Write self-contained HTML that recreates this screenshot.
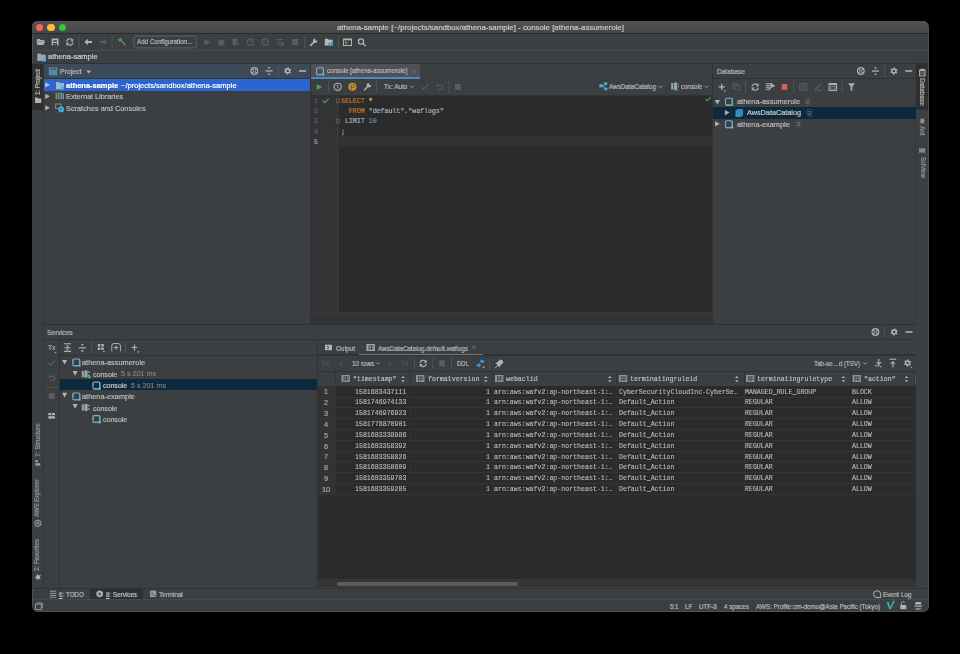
<!DOCTYPE html>
<html><head><meta charset="utf-8">
<style>
*{margin:0;padding:0;box-sizing:border-box}
html,body{width:960px;height:654px;background:#000;overflow:hidden;font-family:"Liberation Sans",sans-serif;color:#bbbbbb;position:relative}
.a{position:absolute}
.t{position:absolute;white-space:pre;line-height:1;will-change:transform;-webkit-text-stroke-width:0.2px}
.m{font-family:"Liberation Mono",monospace}
</style></head><body>
<div class="a" style="left:31.5px;top:20.5px;width:897px;height:591.3px;background:#3c3f41;border-radius:5.5px;border:1px solid #4d4f51"></div>
<div class="a" style="left:32px;top:21px;width:896px;height:12px;background:linear-gradient(#525252,#464646);border-radius:5px 5px 0 0"></div>
<div class="a" style="left:32px;top:33px;width:896px;height:1px;background:#2a2a2a;"></div>
<div class="a" style="left:35.9px;top:24.0px;width:7.4px;height:7.4px;border-radius:50%;background:#fe5f57"></div>
<div class="a" style="left:47.3px;top:24.0px;width:7.4px;height:7.4px;border-radius:50%;background:#febc2e"></div>
<div class="a" style="left:58.8px;top:24.0px;width:7.4px;height:7.4px;border-radius:50%;background:#28c840"></div>
<div class="t" style="left:337.2px;top:24.0px;font-size:7.86px;color:#cacaca;">athena-sample [~/projects/sandbox/athena-sample] - console [athena-assumerole]</div>
<div class="a" style="left:32px;top:50px;width:896px;height:1px;background:#4b4d4f;"></div>
<div class="t" style="left:47.6px;top:52.6px;font-size:7.5px;color:#cfcfcf;">athena-sample</div>
<div class="a" style="left:32px;top:63px;width:896px;height:1px;background:#323232;"></div>
<div class="a" style="left:32px;top:63px;width:11px;height:525px;background:#3c3f41;"></div>
<div class="a" style="left:43px;top:63px;width:1px;height:525px;background:#333537;"></div>
<div class="a" style="left:32px;top:64px;width:11px;height:46px;background:#2d2f31;"></div>
<div class="a" style="left:916px;top:63px;width:12px;height:525px;background:#3c3f41;"></div>
<div class="a" style="left:915px;top:63px;width:1px;height:261px;background:#333537;"></div>
<div class="a" style="left:916px;top:63px;width:12px;height:47px;background:#2d2f31;"></div>
<div class="a" style="left:44px;top:64px;width:266px;height:14px;background:#3d4a58;"></div>
<div class="a" style="left:44px;top:78px;width:266px;height:1px;background:#323436;"></div>
<div class="t" style="left:59.7px;top:67.5px;font-size:7.0px;color:#bbbbbb;">Project</div>
<div class="a" style="left:44px;top:79px;width:266px;height:12px;background:#2e64d0;"></div>
<div class="t" style="left:66px;top:81.9px;font-size:7.46px;color:#ffffff;font-weight:bold">athena-sample</div>
<div class="t" style="left:120.5px;top:81.9px;font-size:7.56px;color:#ffffff;">~/projects/sandbox/athena-sample</div>
<div class="t" style="left:66px;top:93.3px;font-size:7.35px;color:#bbbbbb;">External Libraries</div>
<div class="t" style="left:66px;top:104.8px;font-size:7.35px;color:#bbbbbb;">Scratches and Consoles</div>
<div class="a" style="left:310px;top:63px;width:1px;height:261px;background:#323232;"></div>
<div class="a" style="left:311px;top:64px;width:402px;height:15px;background:#3c3f41;"></div>
<div class="a" style="left:311px;top:64px;width:109px;height:15px;background:#4e5254;"></div>
<div class="a" style="left:311px;top:77px;width:109px;height:2px;background:#4a88c7;"></div>
<div class="t" style="left:326.75px;top:67.06px;font-size:7.000px;color:#bbbbbb;transform:scaleX(0.8929);transform-origin:0 0;">console [athena-assumerole]</div>
<div class="a" style="left:311px;top:79px;width:402px;height:16px;background:#3c3f41;"></div>
<div class="a" style="left:311px;top:95px;width:402px;height:1px;background:#323232;"></div>
<div class="a" style="left:311px;top:96px;width:28px;height:216px;background:#313335;"></div>
<div class="a" style="left:339px;top:96px;width:374px;height:216px;background:#2b2b2b;"></div>
<div class="a" style="left:338.4px;top:136.1px;width:374.6px;height:9.9px;background:#323232;"></div>
<div class="a" style="left:311px;top:312px;width:402px;height:12px;background:#313335;"></div>
<div class="a" style="left:311px;top:311.6px;width:402px;height:0.8px;background:#37393b;"></div>
<div class="t" style="left:384px;top:83.95px;font-size:7.168px;color:#bbbbbb;transform:scaleX(0.8929);transform-origin:0 0;">Tx: Auto</div>
<div class="t" style="left:609px;top:84.05px;font-size:7.090px;color:#bbbbbb;transform:scaleX(0.8929);transform-origin:0 0;">AwsDataCatalog</div>
<div class="t" style="left:680.7px;top:84.06px;font-size:6.922px;color:#bbbbbb;transform:scaleX(0.8929);transform-origin:0 0;">console</div>
<div class="t m" style="left:340.8px;top:97.84px;font-size:7.392px;color:#a9b7c6;transform:scaleX(0.8929);transform-origin:0 0;"><span style="color:#cc7832;-webkit-text-stroke:0.2px #cc7832">SELECT</span> <span style="color:#e8b060;-webkit-text-stroke:0.5px #e8b060">*</span></div>
<div class="t m" style="left:313.5px;top:97.84px;font-size:7.392px;color:#606366;transform:scaleX(0.8929);transform-origin:0 0;">1</div>
<div class="t m" style="left:340.8px;top:107.94px;font-size:7.392px;color:#a9b7c6;transform:scaleX(0.8929);transform-origin:0 0;">  <span style="color:#cc7832;-webkit-text-stroke:0.2px #cc7832">FROM</span> <span style="color:#a9b7c6;-webkit-text-stroke:0.2px #a9b7c6">"default"</span><span style="color:#a9b7c6;-webkit-text-stroke:0.2px #a9b7c6">.</span><span style="color:#a9b7c6;-webkit-text-stroke:0.2px #a9b7c6">"waflogs"</span></div>
<div class="t m" style="left:313.5px;top:107.94px;font-size:7.392px;color:#606366;transform:scaleX(0.8929);transform-origin:0 0;">2</div>
<div class="t m" style="left:340.8px;top:118.04px;font-size:7.392px;color:#a9b7c6;transform:scaleX(0.8929);transform-origin:0 0;"> <span style="color:#a9b7c6;-webkit-text-stroke:0.2px #a9b7c6">LIMIT</span> <span style="color:#6897bb;-webkit-text-stroke:0.2px #6897bb">10</span></div>
<div class="t m" style="left:313.5px;top:118.04px;font-size:7.392px;color:#606366;transform:scaleX(0.8929);transform-origin:0 0;">3</div>
<div class="t m" style="left:340.8px;top:128.84px;font-size:7.392px;color:#a9b7c6;transform:scaleX(0.8929);transform-origin:0 0;"><span style="color:#cc7832;-webkit-text-stroke:0.6px #cc7832">;</span></div>
<div class="t m" style="left:313.5px;top:128.84px;font-size:7.392px;color:#606366;transform:scaleX(0.8929);transform-origin:0 0;">4</div>
<div class="t m" style="left:340.8px;top:138.54px;font-size:7.392px;color:#a9b7c6;transform:scaleX(0.8929);transform-origin:0 0;"></div>
<div class="t m" style="left:313.5px;top:138.54px;font-size:7.392px;color:#a4a3a3;transform:scaleX(0.8929);transform-origin:0 0;">5</div>
<div class="a" style="left:337.2px;top:96px;width:1.2px;height:216px;background:#393b3d;"></div>
<div class="a" style="left:712px;top:63px;width:1px;height:261px;background:#323232;"></div>
<div class="a" style="left:713px;top:64px;width:203px;height:14px;background:#3c3f41;"></div>
<div class="a" style="left:713px;top:78px;width:203px;height:1px;background:#323232;"></div>
<div class="t" style="left:716.6px;top:68.04px;font-size:7.325px;color:#bbbbbb;transform:scaleX(0.8929);transform-origin:0 0;">Database</div>
<div class="a" style="left:713px;top:79px;width:203px;height:16px;background:#3c3f41;"></div>
<div class="a" style="left:713px;top:107px;width:203px;height:11.5px;background:#0d293e;"></div>
<div class="t" style="left:736.9px;top:98.2px;font-size:7.36px;color:#bbbbbb;">athena-assumerole</div>
<div class="t" style="left:747.2px;top:109.1px;font-size:7.27px;color:#c8c8c8;">AwsDataCatalog</div>
<div class="t" style="left:736.9px;top:120.8px;font-size:7.36px;color:#bbbbbb;">athena-example</div>
<div class="a" style="left:43px;top:324px;width:873px;height:1px;background:#2f3133;"></div>
<div class="a" style="left:43px;top:325px;width:873px;height:14px;background:#3c3f41;"></div>
<div class="t" style="left:47.3px;top:329.33px;font-size:7.538px;color:#bbbbbb;transform:scaleX(0.8929);transform-origin:0 0;">Services</div>
<div class="a" style="left:43px;top:338.5px;width:873px;height:1px;background:#323232;"></div>
<div class="a" style="left:59.5px;top:354.8px;width:257.5px;height:1px;background:#323232;"></div>
<div class="a" style="left:59px;top:339px;width:1px;height:249px;background:#323232;"></div>
<div class="a" style="left:317px;top:339px;width:1px;height:249px;background:#323232;"></div>
<div class="a" style="left:60px;top:379px;width:257px;height:11.4px;background:#0d293e;"></div>
<div class="t" style="left:82.25px;top:359.2px;font-size:7.38px;color:#bbbbbb;">athena-assumerole</div>
<div class="t" style="left:92.9px;top:370.6px;font-size:7.06px;color:#bbbbbb;">console</div>
<div class="t" style="left:120.75px;top:371.3px;font-size:7.16px;color:#7c7f82;">5 s 201 ms</div>
<div class="t" style="left:102.9px;top:382.0px;font-size:7.06px;color:#c8c8c8;">console</div>
<div class="t" style="left:130.75px;top:382.7px;font-size:7.16px;color:#7c7f82;">5 s 201 ms</div>
<div class="t" style="left:82.25px;top:393.2px;font-size:7.38px;color:#bbbbbb;">athena-example</div>
<div class="t" style="left:92.9px;top:404.6px;font-size:7.06px;color:#bbbbbb;">console</div>
<div class="t" style="left:102.9px;top:415.7px;font-size:7.06px;color:#bbbbbb;">console</div>
<div class="a" style="left:318px;top:339.5px;width:598px;height:15px;background:#3c3f41;"></div>
<div class="a" style="left:318px;top:354px;width:598px;height:1.5px;background:#303234;"></div>
<div class="t" style="left:335.7px;top:344.76px;font-size:7.056px;color:#bbbbbb;transform:scaleX(0.8929);transform-origin:0 0;">Output</div>
<div class="t" style="left:377.6px;top:344.76px;font-size:7.011px;color:#bbbbbb;transform:scaleX(0.8929);transform-origin:0 0;">AwsDataCatalog.default.waflogs</div>
<div class="a" style="left:359.1px;top:354px;width:124px;height:1.4px;background:#73777a;"></div>
<div class="a" style="left:318px;top:355.5px;width:598px;height:15.5px;background:#3c3f41;"></div>
<div class="a" style="left:318px;top:371px;width:598px;height:1px;background:#303234;"></div>
<div class="t" style="left:351.5px;top:360.65px;font-size:7.123px;color:#bbbbbb;transform:scaleX(0.8929);transform-origin:0 0;">10 rows</div>
<div class="t" style="left:457px;top:360.68px;font-size:6.720px;color:#bbbbbb;transform:scaleX(0.8929);transform-origin:0 0;">DDL</div>
<div class="t" style="left:814px;top:360.66px;font-size:6.944px;color:#bbbbbb;transform:scaleX(0.8929);transform-origin:0 0;">Tab-se…d (TSV)</div>
<div class="a" style="left:318px;top:372px;width:598px;height:207px;background:#2b2b2b;"></div>
<div class="a" style="left:318px;top:372px;width:598px;height:14px;background:#3c3f41;"></div>
<div class="a" style="left:318px;top:386px;width:16.6px;height:108.5px;background:#313335;"></div>
<div class="a" style="left:334.6px;top:372px;width:1px;height:14px;background:#323436;"></div>
<div class="a" style="left:334.6px;top:386px;width:0.8px;height:108.5px;background:#323232;"></div>
<div class="a" style="left:409.8px;top:372px;width:1px;height:14px;background:#323436;"></div>
<div class="a" style="left:409.8px;top:386px;width:0.8px;height:108.5px;background:#323232;"></div>
<div class="a" style="left:492px;top:372px;width:1px;height:14px;background:#323436;"></div>
<div class="a" style="left:492px;top:386px;width:0.8px;height:108.5px;background:#323232;"></div>
<div class="a" style="left:616px;top:372px;width:1px;height:14px;background:#323436;"></div>
<div class="a" style="left:616px;top:386px;width:0.8px;height:108.5px;background:#323232;"></div>
<div class="a" style="left:744px;top:372px;width:1px;height:14px;background:#323436;"></div>
<div class="a" style="left:744px;top:386px;width:0.8px;height:108.5px;background:#323232;"></div>
<div class="a" style="left:850.6px;top:372px;width:1px;height:14px;background:#323436;"></div>
<div class="a" style="left:850.6px;top:386px;width:0.8px;height:108.5px;background:#323232;"></div>
<div class="a" style="left:913.8px;top:372px;width:1px;height:14px;background:#323436;"></div>
<div class="a" style="left:913.8px;top:386px;width:0.8px;height:108.5px;background:#323232;"></div>
<div class="a" style="left:914.8px;top:374px;width:1.6px;height:10px;background:#55595c;"></div>
<div class="t m" style="left:352.5px;top:377.0px;font-size:6.6px;color:#bbbbbb;">"timestamp"</div>
<div class="t m" style="left:427.5px;top:377.0px;font-size:6.6px;color:#bbbbbb;">formatversion</div>
<div class="t m" style="left:505.7px;top:377.0px;font-size:6.6px;color:#bbbbbb;">webaclid</div>
<div class="t m" style="left:630.25px;top:377.0px;font-size:6.6px;color:#bbbbbb;">terminatingruleid</div>
<div class="t m" style="left:757px;top:377.0px;font-size:6.6px;color:#bbbbbb;">terminatingruletype</div>
<div class="t m" style="left:863.5px;top:377.0px;font-size:6.6px;color:#bbbbbb;">"action"</div>
<div class="a" style="left:318px;top:396.5px;width:598px;height:0.7px;background:#353535;"></div>
<div class="t" style="left:324.27000000000004px;top:388.4px;font-size:7.3px;color:#a4a6a8;">1</div>
<div class="t m" style="left:355.12px;top:389.6px;font-size:6.6px;color:#b9bcbe;font-weight:normal;-webkit-text-stroke:0.12px #b9bcbe">1581683437111</div>
<div class="t m" style="left:486.04px;top:389.6px;font-size:6.6px;color:#b9bcbe;font-weight:normal;-webkit-text-stroke:0.12px #b9bcbe">1</div>
<div class="t m" style="left:494.3px;top:389.6px;font-size:6.6px;color:#b9bcbe;font-weight:normal;-webkit-text-stroke:0.12px #b9bcbe">arn:aws:wafv2:ap-northeast-1:…</div>
<div class="t m" style="left:618.9px;top:389.6px;font-size:6.6px;color:#b9bcbe;font-weight:normal;-webkit-text-stroke:0.12px #b9bcbe">CyberSecurityCloudInc-CyberSe…</div>
<div class="t m" style="left:745px;top:389.6px;font-size:6.6px;color:#b9bcbe;font-weight:normal;-webkit-text-stroke:0.12px #b9bcbe">MANAGED_RULE_GROUP</div>
<div class="t m" style="left:852.2px;top:389.6px;font-size:6.6px;color:#b9bcbe;font-weight:normal;-webkit-text-stroke:0.12px #b9bcbe">BLOCK</div>
<div class="a" style="left:318px;top:407.33px;width:598px;height:0.7px;background:#353535;"></div>
<div class="t" style="left:324.27000000000004px;top:399.22999999999996px;font-size:7.3px;color:#a4a6a8;">2</div>
<div class="t m" style="left:355.12px;top:400.43px;font-size:6.6px;color:#b9bcbe;font-weight:normal;-webkit-text-stroke:0.12px #b9bcbe">1581746974133</div>
<div class="t m" style="left:486.04px;top:400.43px;font-size:6.6px;color:#b9bcbe;font-weight:normal;-webkit-text-stroke:0.12px #b9bcbe">1</div>
<div class="t m" style="left:494.3px;top:400.43px;font-size:6.6px;color:#b9bcbe;font-weight:normal;-webkit-text-stroke:0.12px #b9bcbe">arn:aws:wafv2:ap-northeast-1:…</div>
<div class="t m" style="left:618.9px;top:400.43px;font-size:6.6px;color:#b9bcbe;font-weight:normal;-webkit-text-stroke:0.12px #b9bcbe">Default_Action</div>
<div class="t m" style="left:745px;top:400.43px;font-size:6.6px;color:#b9bcbe;font-weight:normal;-webkit-text-stroke:0.12px #b9bcbe">REGULAR</div>
<div class="t m" style="left:852.2px;top:400.43px;font-size:6.6px;color:#b9bcbe;font-weight:normal;-webkit-text-stroke:0.12px #b9bcbe">ALLOW</div>
<div class="a" style="left:318px;top:418.16px;width:598px;height:0.7px;background:#353535;"></div>
<div class="t" style="left:324.27000000000004px;top:410.06px;font-size:7.3px;color:#a4a6a8;">3</div>
<div class="t m" style="left:355.12px;top:411.26000000000005px;font-size:6.6px;color:#b9bcbe;font-weight:normal;-webkit-text-stroke:0.12px #b9bcbe">1581746976923</div>
<div class="t m" style="left:486.04px;top:411.26000000000005px;font-size:6.6px;color:#b9bcbe;font-weight:normal;-webkit-text-stroke:0.12px #b9bcbe">1</div>
<div class="t m" style="left:494.3px;top:411.26000000000005px;font-size:6.6px;color:#b9bcbe;font-weight:normal;-webkit-text-stroke:0.12px #b9bcbe">arn:aws:wafv2:ap-northeast-1:…</div>
<div class="t m" style="left:618.9px;top:411.26000000000005px;font-size:6.6px;color:#b9bcbe;font-weight:normal;-webkit-text-stroke:0.12px #b9bcbe">Default_Action</div>
<div class="t m" style="left:745px;top:411.26000000000005px;font-size:6.6px;color:#b9bcbe;font-weight:normal;-webkit-text-stroke:0.12px #b9bcbe">REGULAR</div>
<div class="t m" style="left:852.2px;top:411.26000000000005px;font-size:6.6px;color:#b9bcbe;font-weight:normal;-webkit-text-stroke:0.12px #b9bcbe">ALLOW</div>
<div class="a" style="left:318px;top:428.99px;width:598px;height:0.7px;background:#353535;"></div>
<div class="t" style="left:324.27000000000004px;top:420.89px;font-size:7.3px;color:#a4a6a8;">4</div>
<div class="t m" style="left:355.12px;top:422.09000000000003px;font-size:6.6px;color:#b9bcbe;font-weight:normal;-webkit-text-stroke:0.12px #b9bcbe">1581778870901</div>
<div class="t m" style="left:486.04px;top:422.09000000000003px;font-size:6.6px;color:#b9bcbe;font-weight:normal;-webkit-text-stroke:0.12px #b9bcbe">1</div>
<div class="t m" style="left:494.3px;top:422.09000000000003px;font-size:6.6px;color:#b9bcbe;font-weight:normal;-webkit-text-stroke:0.12px #b9bcbe">arn:aws:wafv2:ap-northeast-1:…</div>
<div class="t m" style="left:618.9px;top:422.09000000000003px;font-size:6.6px;color:#b9bcbe;font-weight:normal;-webkit-text-stroke:0.12px #b9bcbe">Default_Action</div>
<div class="t m" style="left:745px;top:422.09000000000003px;font-size:6.6px;color:#b9bcbe;font-weight:normal;-webkit-text-stroke:0.12px #b9bcbe">REGULAR</div>
<div class="t m" style="left:852.2px;top:422.09000000000003px;font-size:6.6px;color:#b9bcbe;font-weight:normal;-webkit-text-stroke:0.12px #b9bcbe">ALLOW</div>
<div class="a" style="left:318px;top:439.82px;width:598px;height:0.7px;background:#353535;"></div>
<div class="t" style="left:324.27000000000004px;top:431.71999999999997px;font-size:7.3px;color:#a4a6a8;">5</div>
<div class="t m" style="left:355.12px;top:432.92px;font-size:6.6px;color:#b9bcbe;font-weight:normal;-webkit-text-stroke:0.12px #b9bcbe">1581683338986</div>
<div class="t m" style="left:486.04px;top:432.92px;font-size:6.6px;color:#b9bcbe;font-weight:normal;-webkit-text-stroke:0.12px #b9bcbe">1</div>
<div class="t m" style="left:494.3px;top:432.92px;font-size:6.6px;color:#b9bcbe;font-weight:normal;-webkit-text-stroke:0.12px #b9bcbe">arn:aws:wafv2:ap-northeast-1:…</div>
<div class="t m" style="left:618.9px;top:432.92px;font-size:6.6px;color:#b9bcbe;font-weight:normal;-webkit-text-stroke:0.12px #b9bcbe">Default_Action</div>
<div class="t m" style="left:745px;top:432.92px;font-size:6.6px;color:#b9bcbe;font-weight:normal;-webkit-text-stroke:0.12px #b9bcbe">REGULAR</div>
<div class="t m" style="left:852.2px;top:432.92px;font-size:6.6px;color:#b9bcbe;font-weight:normal;-webkit-text-stroke:0.12px #b9bcbe">ALLOW</div>
<div class="a" style="left:318px;top:450.65px;width:598px;height:0.7px;background:#353535;"></div>
<div class="t" style="left:324.27000000000004px;top:442.54999999999995px;font-size:7.3px;color:#a4a6a8;">6</div>
<div class="t m" style="left:355.12px;top:443.75px;font-size:6.6px;color:#b9bcbe;font-weight:normal;-webkit-text-stroke:0.12px #b9bcbe">1581683358392</div>
<div class="t m" style="left:486.04px;top:443.75px;font-size:6.6px;color:#b9bcbe;font-weight:normal;-webkit-text-stroke:0.12px #b9bcbe">1</div>
<div class="t m" style="left:494.3px;top:443.75px;font-size:6.6px;color:#b9bcbe;font-weight:normal;-webkit-text-stroke:0.12px #b9bcbe">arn:aws:wafv2:ap-northeast-1:…</div>
<div class="t m" style="left:618.9px;top:443.75px;font-size:6.6px;color:#b9bcbe;font-weight:normal;-webkit-text-stroke:0.12px #b9bcbe">Default_Action</div>
<div class="t m" style="left:745px;top:443.75px;font-size:6.6px;color:#b9bcbe;font-weight:normal;-webkit-text-stroke:0.12px #b9bcbe">REGULAR</div>
<div class="t m" style="left:852.2px;top:443.75px;font-size:6.6px;color:#b9bcbe;font-weight:normal;-webkit-text-stroke:0.12px #b9bcbe">ALLOW</div>
<div class="a" style="left:318px;top:461.48px;width:598px;height:0.7px;background:#353535;"></div>
<div class="t" style="left:324.27000000000004px;top:453.38px;font-size:7.3px;color:#a4a6a8;">7</div>
<div class="t m" style="left:355.12px;top:454.58000000000004px;font-size:6.6px;color:#b9bcbe;font-weight:normal;-webkit-text-stroke:0.12px #b9bcbe">1581683358826</div>
<div class="t m" style="left:486.04px;top:454.58000000000004px;font-size:6.6px;color:#b9bcbe;font-weight:normal;-webkit-text-stroke:0.12px #b9bcbe">1</div>
<div class="t m" style="left:494.3px;top:454.58000000000004px;font-size:6.6px;color:#b9bcbe;font-weight:normal;-webkit-text-stroke:0.12px #b9bcbe">arn:aws:wafv2:ap-northeast-1:…</div>
<div class="t m" style="left:618.9px;top:454.58000000000004px;font-size:6.6px;color:#b9bcbe;font-weight:normal;-webkit-text-stroke:0.12px #b9bcbe">Default_Action</div>
<div class="t m" style="left:745px;top:454.58000000000004px;font-size:6.6px;color:#b9bcbe;font-weight:normal;-webkit-text-stroke:0.12px #b9bcbe">REGULAR</div>
<div class="t m" style="left:852.2px;top:454.58000000000004px;font-size:6.6px;color:#b9bcbe;font-weight:normal;-webkit-text-stroke:0.12px #b9bcbe">ALLOW</div>
<div class="a" style="left:318px;top:472.31px;width:598px;height:0.7px;background:#353535;"></div>
<div class="t" style="left:324.27000000000004px;top:464.21px;font-size:7.3px;color:#a4a6a8;">8</div>
<div class="t m" style="left:355.12px;top:465.41px;font-size:6.6px;color:#b9bcbe;font-weight:normal;-webkit-text-stroke:0.12px #b9bcbe">1581683358609</div>
<div class="t m" style="left:486.04px;top:465.41px;font-size:6.6px;color:#b9bcbe;font-weight:normal;-webkit-text-stroke:0.12px #b9bcbe">1</div>
<div class="t m" style="left:494.3px;top:465.41px;font-size:6.6px;color:#b9bcbe;font-weight:normal;-webkit-text-stroke:0.12px #b9bcbe">arn:aws:wafv2:ap-northeast-1:…</div>
<div class="t m" style="left:618.9px;top:465.41px;font-size:6.6px;color:#b9bcbe;font-weight:normal;-webkit-text-stroke:0.12px #b9bcbe">Default_Action</div>
<div class="t m" style="left:745px;top:465.41px;font-size:6.6px;color:#b9bcbe;font-weight:normal;-webkit-text-stroke:0.12px #b9bcbe">REGULAR</div>
<div class="t m" style="left:852.2px;top:465.41px;font-size:6.6px;color:#b9bcbe;font-weight:normal;-webkit-text-stroke:0.12px #b9bcbe">ALLOW</div>
<div class="a" style="left:318px;top:483.14px;width:598px;height:0.7px;background:#353535;"></div>
<div class="t" style="left:324.27000000000004px;top:475.03999999999996px;font-size:7.3px;color:#a4a6a8;">9</div>
<div class="t m" style="left:355.12px;top:476.24px;font-size:6.6px;color:#b9bcbe;font-weight:normal;-webkit-text-stroke:0.12px #b9bcbe">1581683359703</div>
<div class="t m" style="left:486.04px;top:476.24px;font-size:6.6px;color:#b9bcbe;font-weight:normal;-webkit-text-stroke:0.12px #b9bcbe">1</div>
<div class="t m" style="left:494.3px;top:476.24px;font-size:6.6px;color:#b9bcbe;font-weight:normal;-webkit-text-stroke:0.12px #b9bcbe">arn:aws:wafv2:ap-northeast-1:…</div>
<div class="t m" style="left:618.9px;top:476.24px;font-size:6.6px;color:#b9bcbe;font-weight:normal;-webkit-text-stroke:0.12px #b9bcbe">Default_Action</div>
<div class="t m" style="left:745px;top:476.24px;font-size:6.6px;color:#b9bcbe;font-weight:normal;-webkit-text-stroke:0.12px #b9bcbe">REGULAR</div>
<div class="t m" style="left:852.2px;top:476.24px;font-size:6.6px;color:#b9bcbe;font-weight:normal;-webkit-text-stroke:0.12px #b9bcbe">ALLOW</div>
<div class="a" style="left:318px;top:493.97px;width:598px;height:0.7px;background:#353535;"></div>
<div class="t" style="left:322.24px;top:485.87px;font-size:7.3px;color:#a4a6a8;">10</div>
<div class="t m" style="left:355.12px;top:487.07000000000005px;font-size:6.6px;color:#b9bcbe;font-weight:normal;-webkit-text-stroke:0.12px #b9bcbe">1581683359285</div>
<div class="t m" style="left:486.04px;top:487.07000000000005px;font-size:6.6px;color:#b9bcbe;font-weight:normal;-webkit-text-stroke:0.12px #b9bcbe">1</div>
<div class="t m" style="left:494.3px;top:487.07000000000005px;font-size:6.6px;color:#b9bcbe;font-weight:normal;-webkit-text-stroke:0.12px #b9bcbe">arn:aws:wafv2:ap-northeast-1:…</div>
<div class="t m" style="left:618.9px;top:487.07000000000005px;font-size:6.6px;color:#b9bcbe;font-weight:normal;-webkit-text-stroke:0.12px #b9bcbe">Default_Action</div>
<div class="t m" style="left:745px;top:487.07000000000005px;font-size:6.6px;color:#b9bcbe;font-weight:normal;-webkit-text-stroke:0.12px #b9bcbe">REGULAR</div>
<div class="t m" style="left:852.2px;top:487.07000000000005px;font-size:6.6px;color:#b9bcbe;font-weight:normal;-webkit-text-stroke:0.12px #b9bcbe">ALLOW</div>
<div class="a" style="left:318px;top:579.3px;width:598px;height:8px;background:#333537;"></div>
<div class="a" style="left:337px;top:581.5px;width:181px;height:4.4px;background:#5a5d60;border-radius:2.2px"></div>
<div class="a" style="left:32px;top:587.8px;width:896px;height:0.8px;background:#323232;"></div>
<div class="a" style="left:90px;top:588.5px;width:52.8px;height:11px;background:#2d2f31;"></div>
<div class="t" style="left:59px;top:590.86px;font-size:7.056px;color:#bbbbbb;transform:scaleX(0.8929);transform-origin:0 0;"><u>6</u>: TODO</div>
<div class="t" style="left:105.6px;top:590.86px;font-size:7.056px;color:#c8c8c8;transform:scaleX(0.8929);transform-origin:0 0;"><u>8</u>: Services</div>
<div class="t" style="left:159px;top:590.86px;font-size:7.056px;color:#bbbbbb;transform:scaleX(0.8929);transform-origin:0 0;">Terminal</div>
<div class="t" style="left:882.5px;top:590.86px;font-size:7.056px;color:#bbbbbb;transform:scaleX(0.8929);transform-origin:0 0;">Event Log</div>
<div class="a" style="left:32px;top:599.3px;width:896px;height:0.8px;background:#46484a;"></div>
<div class="t" style="left:669.7px;top:602.76px;font-size:7.011px;color:#bbbbbb;transform:scaleX(0.8929);transform-origin:0 0;">5:1</div>
<div class="t" style="left:685px;top:602.76px;font-size:7.011px;color:#bbbbbb;transform:scaleX(0.8929);transform-origin:0 0;">LF</div>
<div class="t" style="left:698.8px;top:602.76px;font-size:7.011px;color:#bbbbbb;transform:scaleX(0.8929);transform-origin:0 0;">UTF-8</div>
<div class="t" style="left:724.3px;top:602.76px;font-size:7.011px;color:#bbbbbb;transform:scaleX(0.8929);transform-origin:0 0;">4 spaces</div>
<div class="t" style="left:756px;top:602.76px;font-size:7.022px;color:#bbbbbb;transform:scaleX(0.8929);transform-origin:0 0;">AWS: Profile:cm-demo@Asia Pacific (Tokyo)</div>
<div class="t" style="left:137px;top:37.76px;font-size:7.022px;color:#bbbbbb;transform:scaleX(0.8929);transform-origin:0 0;">Add Configuration...</div>
<div class="a" style="left:35.07px;top:94.70px;white-space:pre;font-size:6.832px;line-height:1;color:#c4c4c4;will-change:transform;-webkit-text-stroke-width:0.2px;transform:rotate(-90deg) scaleX(0.8929);transform-origin:0 0">1: Project</div>
<div class="a" style="left:33.69px;top:457.10px;white-space:pre;font-size:7.347px;line-height:1;color:#9a9da0;will-change:transform;-webkit-text-stroke-width:0.2px;transform:rotate(-90deg) scaleX(0.8929);transform-origin:0 0">7: Structure</div>
<div class="a" style="left:34.11px;top:516.70px;white-space:pre;font-size:6.776px;line-height:1;color:#9a9da0;will-change:transform;-webkit-text-stroke-width:0.2px;transform:rotate(-90deg) scaleX(0.8929);transform-origin:0 0">AWS Explorer</div>
<div class="a" style="left:33.94px;top:571.00px;white-space:pre;font-size:6.899px;line-height:1;color:#9a9da0;will-change:transform;-webkit-text-stroke-width:0.2px;transform:rotate(-90deg) scaleX(0.8929);transform-origin:0 0">2: Favorites</div>
<div class="a" style="left:926.10px;top:78.00px;white-space:pre;font-size:7.325px;line-height:1;color:#bbbbbb;will-change:transform;-webkit-text-stroke-width:0.2px;transform:rotate(90deg) scaleX(0.8929);transform-origin:0 0">Database</div>
<div class="a" style="left:925.95px;top:126.00px;white-space:pre;font-size:7.056px;line-height:1;color:#9a9da0;will-change:transform;-webkit-text-stroke-width:0.2px;transform:rotate(90deg) scaleX(0.8929);transform-origin:0 0">Ant</div>
<div class="a" style="left:925.74px;top:156.50px;white-space:pre;font-size:6.675px;line-height:1;color:#9a9da0;will-change:transform;-webkit-text-stroke-width:0.2px;transform:rotate(90deg) scaleX(0.8929);transform-origin:0 0">SciView</div>
<div class="t" style="left:806.3px;top:99.3px;font-size:6px;color:#7a7d80">2</div>
<div class="t" style="left:807.9px;top:110.1px;font-size:6px;color:#7a7d80">2</div>
<div class="t" style="left:796.9px;top:121.3px;font-size:6px;color:#7a7d80">2</div>
<div class="t" style="left:48.3px;top:344.6px;font-size:6.6px;color:#afb1b3">Tx</div>
<svg class="a" style="left:0;top:0" width="960" height="654" viewBox="0 0 960 654"><path d="M36.8 39h3l1 1h3.4v1.4h-5.8l-1.6 3.6z" fill="#afb1b3"/><path d="M37 45l1.8-3.6h6.4l-1.8 3.6z" fill="#afb1b3"/>
<path d="M51.7 38.4h6.8v7h-6.8z M53.2 40.2v1.5h3.8v-1.5z M53.2 43v2.4h3.8v-2.4z" fill="#afb1b3" fill-rule="evenodd"/><rect x="54.6" y="43.8" width="1.2" height="1.6" fill="#afb1b3" opacity=".6"/>
<path d="M66.6 41.4a3.3 3.3 0 0 1 5.8-1.4" stroke="#afb1b3" stroke-width="1.2" fill="none"/><path d="M73.3 38.4v3h-3z" fill="#afb1b3"/><path d="M73 42.6a3.3 3.3 0 0 1 -5.8 1.4" stroke="#afb1b3" stroke-width="1.2" fill="none"/><path d="M66.3 45.6v-3h3z" fill="#afb1b3"/>
<rect x="78.5" y="36" width="1" height="12" fill="#505456"/>
<path d="M84.4 42l3.4-3.2v2.2h4.2v2h-4.2v2.2z" fill="#afb1b3"/>
<path d="M107 42l-3.4-3.2v2.2h-3.8v2h3.8v2.2z" fill="#5b5e60"/>
<rect x="111.5" y="36" width="1" height="12" fill="#505456"/>
<path d="M118 39.8l2.2-1.8 2 .6 -1 1.2 4.8 5 -1 .9 -4.8-5 -1.2 1z" fill="#4e9a57"/>
<rect x="133.9" y="36.1" width="62.5" height="11.8" rx="2" fill="none" stroke="#5e6163" stroke-width="1"/>
<path d="M204.3 38.8l6 3.4-6 3.4z" fill="#5b5e60"/>
<ellipse cx="221.3" cy="42.6" rx="2.6" ry="3" fill="#5b5e60"/><path d="M218 39.5l1.5 1.3 M224.6 39.5l-1.5 1.3 M217.7 42.5h1.5 M223.4 42.5h1.5 M218 45.6l1.5-1.3 M224.6 45.6l-1.5-1.3" stroke="#5b5e60" stroke-width="0.9"/>
<path d="M232.2 38.8h5.2v3.2c0 2.2-1.4 3.2-2.6 3.7-1.2-.5-2.6-1.5-2.6-3.7z" fill="#5b5e60"/><path d="M236.2 41.6l3.8 2.2-3.8 2.2z" fill="#5b5e60" stroke="#3c3f41" stroke-width=".6"/>
<circle cx="250.3" cy="42" r="3.1" fill="none" stroke="#5b5e60" stroke-width="1.2"/><path d="M250.3 42l-1.6-1.8 M250.3 42l1.8-1" stroke="#5b5e60" stroke-width=".8"/><path d="M251.6 43.2l4 1.7-1.5.5.9 1.6-.8.4-.9-1.6-1.2 1z" fill="#5b5e60" stroke="#3c3f41" stroke-width=".5"/>
<circle cx="265.2" cy="42" r="3.1" fill="none" stroke="#5b5e60" stroke-width="1.2"/><path d="M265.2 42l-1.6-1.8" stroke="#5b5e60" stroke-width=".8"/><path d="M266.3 42.6l3.8 2.1-3.8 2.1z" fill="#5b5e60" stroke="#3c3f41" stroke-width=".6"/>
<path d="M277 39h5.5v1h-5.5z M277 41.3h4v1h-4z M277 43.6h3v1h-3z" fill="#5b5e60"/><path d="M281 42l4 2.2-4 2.2z" fill="#5b5e60"/>
<rect x="292.2" y="39" width="5.8" height="6" fill="#5b5e60"/>
<rect x="304.2" y="36" width="1" height="12" fill="#505456"/>
<path d="M324.8 38.8h3.2l.8 1h4v5.8h-8z" fill="#b4b9bd"/><rect x="328.3" y="43" width="1.8" height="2.8" fill="#3592c4"/><rect x="330.8" y="41.6" width="1.9" height="4.2" fill="#3592c4"/>
<rect x="337.9" y="36" width="1" height="12" fill="#505456"/>
<rect x="343.5" y="39" width="8" height="6.5" fill="none" stroke="#afb1b3" stroke-width="1"/><rect x="343.5" y="39" width="8" height="1.3" fill="#afb1b3"/><path d="M345.2 41l2.8 1.7-2.8 1.7z" fill="#59a869"/>
<circle cx="361" cy="41.5" r="2.6" fill="none" stroke="#afb1b3" stroke-width="1.3"/><path d="M363 43.5l2.7 2.5" stroke="#afb1b3" stroke-width="1.5"/>
<path d="M37.3 53.5h3.4000000000000004l0.8500000000000001 1.125h4.25v6.375h-8.5z" fill="#9aa7b0"/>
<rect x="42.5" y="58.3" width="3.3" height="3.3" fill="#3bb5e8"/>
<path d="M35 97.6h2.6l.7.9h3v4.6h-6.3z" fill="#afb1b3"/>
<rect x="49.3" y="68" width="7.4" height="6.8" fill="none" stroke="#8c9196" stroke-width="0.9"/><rect x="50" y="69.6" width="6" height="4.6" fill="#3d8fc4"/>
<path d="M86.2 70.5h5l-2.5 3z" fill="#afb1b3"/>
<circle cx="254.3" cy="70.9" r="3.9" fill="#afb1b3"/><circle cx="254.3" cy="70.9" r="2.75" fill="#3d4a58"/><path d="M252.10000000000002 68.7L256.5 73.10000000000001 M256.5 68.7L252.10000000000002 73.10000000000001" stroke="#afb1b3" stroke-width="1.1"/><circle cx="254.3" cy="70.9" r=".8" fill="#3d4a58"/>
<rect x="265.6" y="70.3" width="7" height="1.3" fill="#afb1b3"/><path d="M267.6 67.3h3l-1.5 1.8z M267.6 74.6h3l-1.5-1.8z" fill="#afb1b3"/>
<rect x="278.0" y="65.5" width="1" height="11.5" fill="#4a5866"/>
<polygon points="287.70,67.20 288.66,67.33 289.03,68.59 289.58,69.02 290.90,69.05 291.27,69.94 290.36,70.90 290.27,71.59 290.90,72.75 290.32,73.52 289.03,73.21 288.39,73.47 287.70,74.60 286.74,74.47 286.37,73.21 285.82,72.78 284.50,72.75 284.13,71.86 285.04,70.90 285.13,70.21 284.50,69.05 285.08,68.28 286.37,68.59 287.01,68.33" fill="#afb1b3"/><circle cx="287.7" cy="70.9" r="1.22" fill="#3d4a58"/>
<rect x="299" y="70.2" width="7" height="1.6" fill="#afb1b3"/>
<path d="M45.300000000000004 82.2l4.6 2.6-4.6 2.6z" fill="#c9c3b6"/>
<path d="M56 82h3.2l0.8 1.095h4.0v6.205h-8z" fill="#a3b4c4"/>
<rect x="61" y="86.6" width="3" height="3" fill="#3bb5e8"/>
<path d="M45.300000000000004 93.7l4.6 2.6-4.6 2.6z" fill="#afb1b3"/>
<rect x="55.6" y="92.6" width="1.2" height="6.6" fill="#8c9196"/><rect x="57.5" y="92.6" width="1.2" height="6.6" fill="#62b543"/><rect x="59.4" y="92.6" width="1.2" height="6.6" fill="#8c9196"/><rect x="61.2" y="92.6" width="1.2" height="6.6" fill="#40b6e0"/><rect x="63" y="93.5" width="1" height="5.7" fill="#8c9196"/>
<path d="M45.300000000000004 105.2l4.6 2.6-4.6 2.6z" fill="#afb1b3"/>
<rect x="55.6" y="104" width="5.5" height="4.5" fill="none" stroke="#8c9196" stroke-width="0.9"/><circle cx="61.2" cy="109.4" r="2.8" fill="#40b6e0"/><path d="M60.8 108v1.7h1.3" stroke="#2b2b2b" stroke-width=".6" fill="none"/>
<rect x="316.6" y="67.8" width="6.8" height="6.8" rx="1" fill="none" stroke="#9aa7b0" stroke-width="1.1"/><path d="M323.4 68.2v6" stroke="#40b6e0" stroke-width="1.2"/><path d="M317.5 74.60000000000001h3.6" stroke="#40b6e0" stroke-width="1.2"/><path d="M316.6 68.7v2.8" stroke="#40b6e0" stroke-width="1"/>
<circle cx="323.2" cy="74.4" r="1.2" fill="#9aa7b0"/>
<path d="M412 69.3l4 4 M416 69.3l-4 4" stroke="#6f7375" stroke-width="0.9"/>
<path d="M316.6 84l5.6 3-5.6 3z" fill="#499c54"/>
<rect x="328.0" y="81" width="1" height="12" fill="#505456"/>
<circle cx="337.7" cy="86.8" r="3.6" fill="none" stroke="#afb1b3" stroke-width="1.1"/><path d="M337.5 84.6v2.4l1.8 1.4" stroke="#afb1b3" stroke-width="0.9" fill="none"/>
<circle cx="352.4" cy="86.8" r="4" fill="#c9933a"/><path d="M351.2 90v-5.4h1.8a1.5 1.5 0 0 1 0 3h-1.8" stroke="#7d5519" stroke-width="0.9" fill="none"/>
<rect x="376.0" y="81" width="1" height="12" fill="#505456"/>
<path d="M409.8 85.8l1.9 1.9 1.9-1.9" stroke="#afb1b3" stroke-width="0.8" fill="none"/>
<path d="M421.3 86.8l2.3 2.3 4.6-4.8" stroke="#5b5e60" stroke-width="1.1" fill="none"/>
<path d="M437.5 85.5h3.3a2 2 0 0 1 0 4h-3" stroke="#5b5e60" stroke-width="1.1" fill="none"/><path d="M436.2 85.5l2-1.8v3.6z" fill="#5b5e60"/>
<rect x="448.5" y="81" width="1" height="12" fill="#505456"/>
<rect x="455" y="84" width="5.8" height="6" fill="#5b5e60"/>
<rect x="599.3" y="84.3" width="3.5" height="3" fill="#40b6e0"/><rect x="604.3" y="82.3" width="3" height="2.6" fill="#40b6e0"/><rect x="604.3" y="87.6" width="3" height="2.6" fill="#40b6e0"/><path d="M602.8 85.5h1.5v-2 M602.8 86.5h1.5v2" stroke="#9aa7b0" stroke-width=".6" fill="none"/>
<path d="M658.6 85.8l1.9 1.9 1.9-1.9" stroke="#afb1b3" stroke-width="0.8" fill="none"/>
<rect x="671.2" y="83" width="2" height="6.5" fill="#9aa7b0"/><rect x="674" y="82.5" width="3" height="7.5" rx=".6" fill="#9aa7b0"/><rect x="677.6" y="83.5" width="1.3" height="1.3" fill="#9aa7b0"/><rect x="677.6" y="86" width="1.3" height="1.3" fill="#9aa7b0"/><circle cx="676.6" cy="89.6" r="1.2" fill="#3ec93e"/>
<path d="M704.5 85.8l1.9 1.9 1.9-1.9" stroke="#afb1b3" stroke-width="0.8" fill="none"/>
<path d="M705.5 98.8l1.9 1.9 3.6-3.8" stroke="#499c54" stroke-width="1.1" fill="none"/>
<path d="M322.5 100.5l2.3 2.3 4-4.2" stroke="#499c54" stroke-width="1.3" fill="none"/>
<rect x="336.3" y="99" width="3.4" height="3.8" fill="#313335" stroke="#6a6d70" stroke-width=".6"/><path d="M337.2 100.9h1.6" stroke="#6a6d70" stroke-width=".5"/>
<rect x="336.3" y="119.2" width="3.4" height="3.8" fill="#313335" stroke="#6a6d70" stroke-width=".6"/><path d="M337.2 121.1h1.6" stroke="#6a6d70" stroke-width=".5"/>
<g transform="translate(364 82.8) scale(1.0)"><path d="M0.6 6.9L4.3 3.2" stroke="#afb1b3" stroke-width="1.6" stroke-linecap="round"/><circle cx="4.9" cy="2.4" r="2.2" fill="#afb1b3"/><circle cx="6.1" cy="1.2" r="1.15" fill="#3c3f41"/></g>
<g transform="translate(310 38.2) scale(1.05)"><path d="M0.6 6.9L4.3 3.2" stroke="#afb1b3" stroke-width="1.6" stroke-linecap="round"/><circle cx="4.9" cy="2.4" r="2.2" fill="#afb1b3"/><circle cx="6.1" cy="1.2" r="1.15" fill="#3c3f41"/></g>
<rect x="35.3" y="460" width="2.6" height="2.2" fill="#9a9da0"/><rect x="35.3" y="463.2" width="5" height="2.4" fill="#9a9da0"/>
<circle cx="37.9" cy="523.3" r="3.2" fill="none" stroke="#9a9da0" stroke-width="1"/><path d="M37.9 520.3v6 M35.3 521.8l5.2 3 M35.3 524.8l5.2-3" stroke="#9a9da0" stroke-width=".7"/>
<path d="M37.8 573.8l1 2.3 2.4.2-1.8 1.6.6 2.4-2.2-1.3-2.2 1.3.6-2.4-1.8-1.6 2.4-.2z" fill="#afb1b3" transform="rotate(-90 37.8 577.2)"/>
<ellipse cx="922.3" cy="69.8" rx="2.7" ry="1.1" fill="#afb1b3"/><rect x="919.6" y="70" width="5.4" height="6" fill="none" stroke="#afb1b3" stroke-width="1"/><path d="M919.6 72h5.4 M919.6 74h5.4" stroke="#afb1b3" stroke-width=".6"/>
<path d="M920 118.5l1.2 1 M924.6 118.5l-1.2 1 M919.6 121h1.5 M923.5 121h1.5 M920 123.5l1.2-1 M924.6 123.5l-1.2-1" stroke="#9a9da0" stroke-width=".8"/><ellipse cx="922.3" cy="121" rx="1.6" ry="2.6" fill="#9a9da0"/>
<path d="M919.8 148.3v4.6 M921.4 148.3v4.6 M923 148.3v4.6 M924.6 148.3v4.6 M919.5 149.4h5.5 M919.5 151.2h5.5" stroke="#9a9da0" stroke-width=".9"/>
<circle cx="860.8" cy="71" r="3.9" fill="#afb1b3"/><circle cx="860.8" cy="71" r="2.75" fill="#3c3f41"/><path d="M858.5999999999999 68.8L863.0 73.2 M863.0 68.8L858.5999999999999 73.2" stroke="#afb1b3" stroke-width="1.1"/><circle cx="860.8" cy="71" r=".8" fill="#3c3f41"/>
<rect x="872" y="70.4" width="7" height="1.3" fill="#afb1b3"/><path d="M874 67.4h3l-1.5 1.8z M874 74.7h3l-1.5-1.8z" fill="#afb1b3"/>
<rect x="884.1" y="65.5" width="1" height="11.5" fill="#505456"/>
<polygon points="894.00,67.30 894.96,67.43 895.33,68.69 895.88,69.12 897.20,69.15 897.57,70.04 896.66,71.00 896.57,71.69 897.20,72.85 896.62,73.62 895.33,73.31 894.69,73.57 894.00,74.70 893.04,74.57 892.67,73.31 892.12,72.88 890.80,72.85 890.43,71.96 891.34,71.00 891.43,70.31 890.80,69.15 891.38,68.38 892.67,68.69 893.31,68.43" fill="#afb1b3"/><circle cx="894" cy="71" r="1.22" fill="#3c3f41"/>
<rect x="905.2" y="70.2" width="7" height="1.6" fill="#afb1b3"/>
<path d="M718.6 86.9h6.2 M721.7 83.8v6.2" stroke="#afb1b3" stroke-width="1.3"/><path d="M723.6 90.5h2.6l-1.3 1.4z" fill="#afb1b3"/>
<rect x="733" y="83.8" width="4.8" height="4.8" fill="none" stroke="#5b5e60" stroke-width=".9"/><rect x="735" y="85.6" width="4.8" height="4.2" fill="#3c3f41" stroke="#5b5e60" stroke-width=".9"/>
<rect x="745.0" y="81" width="1" height="12" fill="#505456"/>
<path d="M752 86.5a3.3 3.3 0 0 1 5.8-1.4" stroke="#afb1b3" stroke-width="1.2" fill="none"/><path d="M758.7 83.5v3h-3z" fill="#afb1b3"/><path d="M758.4 87.6a3.3 3.3 0 0 1 -5.8 1.4" stroke="#afb1b3" stroke-width="1.2" fill="none"/><path d="M751.7 90.6v-3h3z" fill="#afb1b3"/>
<path d="M765.8 83.8h6.5 M765.8 85.6h6.5 M765.8 87.4h3.5 M765.8 89.2h2.5" stroke="#afb1b3" stroke-width="1"/>
<g transform="translate(768.3 83.2) scale(0.9)"><path d="M0.6 6.9L4.3 3.2" stroke="#afb1b3" stroke-width="1.6" stroke-linecap="round"/><circle cx="4.9" cy="2.4" r="2.2" fill="#afb1b3"/><circle cx="6.1" cy="1.2" r="1.15" fill="#3c3f41"/></g>
<rect x="781.7" y="84" width="5.6" height="5.8" fill="#db5c5c"/>
<rect x="793.1" y="81" width="1" height="12" fill="#505456"/>
<rect x="799.2" y="83.6" width="7.6" height="6.6" fill="none" stroke="#5b5e60" stroke-width=".9"/><path d="M799.2 85.8h7.6 M799.2 88h7.6 M801.8 83.6v6.6 M804.3 83.6v6.6" stroke="#5b5e60" stroke-width=".7"/>
<path d="M815 89l5.5-5.5 1 1-5.5 5.5h-1z" fill="#5b5e60"/><path d="M814 90.6h8" stroke="#5b5e60" stroke-width=".8"/>
<rect x="829" y="83.6" width="7.6" height="7" fill="none" stroke="#afb1b3" stroke-width="1"/><rect x="829" y="83.6" width="7.6" height="1.5" fill="#afb1b3"/><path d="M830.5 86.6h4.8v2.6h-4.8z" fill="none" stroke="#afb1b3" stroke-width=".6"/>
<rect x="841.5" y="81" width="1" height="12" fill="#505456"/>
<path d="M848 83.2h7l-2.6 3.4v3.8h-1.8v-3.8z" fill="#afb1b3"/>
<path d="M714.8 100.0h5.2l-2.6 4.6z" fill="#afb1b3"/>
<rect x="725.5" y="98.3" width="6.8" height="6.8" rx="1" fill="none" stroke="#9aa7b0" stroke-width="1.1"/><path d="M732.3 98.7v6" stroke="#40b6e0" stroke-width="1.2"/><path d="M726.4 105.10000000000001h3.6" stroke="#40b6e0" stroke-width="1.2"/><path d="M725.5 99.2v2.8" stroke="#40b6e0" stroke-width="1"/>
<circle cx="732.1" cy="104.9" r="1.2" fill="#3ec93e"/>
<rect x="805.5" y="98.5" width="5" height="6.700000000000003" rx="1.5" fill="none" stroke="#4a4d4f" stroke-width="1"/>
<path d="M724.9000000000001 110.0l4.6 2.6-4.6 2.6z" fill="#afb1b3"/>
<path d="M735.5 110.5l2-1.6h5.5v6.5l-2 1.6h-5.5z" fill="#3a8fc0"/><path d="M735.5 110.5h5.5v6.5 M741 110.5l2-1.6" stroke="#276a92" stroke-width=".5" fill="none"/>
<rect x="807.1" y="109.3" width="5.199999999999932" height="7.0" rx="1.5" fill="none" stroke="#2d4a60" stroke-width="1"/>
<path d="M715.1 121.2l4.6 2.6-4.6 2.6z" fill="#afb1b3"/>
<rect x="725.5" y="120.8" width="6.8" height="6.8" rx="1" fill="none" stroke="#9aa7b0" stroke-width="1.1"/><path d="M732.3 121.2v6" stroke="#40b6e0" stroke-width="1.2"/><path d="M726.4 127.6h3.6" stroke="#40b6e0" stroke-width="1.2"/><path d="M725.5 121.7v2.8" stroke="#40b6e0" stroke-width="1"/>
<circle cx="732.1" cy="127.39999999999999" r="1.2" fill="#9aa7b0"/>
<rect x="796.1" y="120.5" width="4.699999999999932" height="6.700000000000003" rx="1.5" fill="none" stroke="#4a4d4f" stroke-width="1"/>
<circle cx="875.4" cy="332" r="3.9" fill="#afb1b3"/><circle cx="875.4" cy="332" r="2.75" fill="#3c3f41"/><path d="M873.1999999999999 329.8L877.6 334.2 M877.6 329.8L873.1999999999999 334.2" stroke="#afb1b3" stroke-width="1.1"/><circle cx="875.4" cy="332" r=".8" fill="#3c3f41"/>
<rect x="883.9" y="327" width="1" height="10" fill="#505456"/>
<polygon points="894.20,328.30 895.16,328.43 895.53,329.69 896.08,330.12 897.40,330.15 897.77,331.04 896.86,332.00 896.77,332.69 897.40,333.85 896.82,334.62 895.53,334.31 894.89,334.57 894.20,335.70 893.24,335.57 892.87,334.31 892.32,333.88 891.00,333.85 890.63,332.96 891.54,332.00 891.63,331.31 891.00,330.15 891.58,329.38 892.87,329.69 893.51,329.43" fill="#afb1b3"/><circle cx="894.2" cy="332" r="1.22" fill="#3c3f41"/>
<rect x="905.5" y="331.2" width="7" height="1.6" fill="#afb1b3"/>
<path d="M54.2 352h2.6l-1.3 1.3z" fill="#afb1b3"/>
<path d="M48.4 363l2.3 2.3 4.6-4.8" stroke="#5b5e60" stroke-width="1.1" fill="none"/>
<path d="M49.6 376.3h3.3a2 2 0 0 1 0 4h-3" stroke="#5b5e60" stroke-width="1.1" fill="none"/><path d="M48.3 376.3l2-1.8v3.6z" fill="#5b5e60"/>
<rect x="46" y="387" width="11.5" height=".8" fill="#505456"/>
<rect x="48.8" y="393" width="5.8" height="5.8" fill="#5b5e60"/>
<rect x="48.3" y="413" width="3" height="2.2" fill="#afb1b3"/><rect x="52" y="413" width="3" height="2.2" fill="#afb1b3"/><rect x="48.3" y="416.2" width="6.7" height="2.4" fill="#afb1b3"/>
<path d="M64 343.8h7 M64 351.4h7" stroke="#afb1b3" stroke-width="1.1"/><path d="M65.8 345.4h3.4l-1.7 1.8z M65.8 349.8h3.4l-1.7-1.8z" fill="#afb1b3"/><rect x="64.5" y="347.2" width="6" height="1" fill="#afb1b3"/>
<rect x="78.8" y="347.2" width="7" height="1.2" fill="#afb1b3"/><path d="M80.6 344.2h3.4l-1.7 1.9z M80.6 351.4h3.4l-1.7-1.9z" fill="#afb1b3"/>
<rect x="91.1" y="342" width="1" height="11" fill="#505456"/>
<rect x="97.8" y="344" width="2.5" height="2.5" fill="#afb1b3"/><rect x="101.3" y="344" width="2.5" height="2.5" fill="#afb1b3"/><rect x="97.8" y="347.5" width="2.5" height="2.5" fill="#afb1b3"/><rect x="101.3" y="347.5" width="2.5" height="2.5" fill="#afb1b3"/><path d="M102.6 351h2.6l-1.3 1.3z" fill="#afb1b3"/>
<path d="M111.8 351.3v-5.5a2.3 2.3 0 0 1 2.3-2.3h4a2.3 2.3 0 0 1 2.3 2.3v5.5" stroke="#afb1b3" stroke-width="1" fill="none"/><path d="M114 347.6h4.2 M116.1 345.5v4.2" stroke="#afb1b3" stroke-width="1"/>
<rect x="125.1" y="342" width="1" height="11" fill="#505456"/>
<path d="M131.7 347.5h5.7 M134.5 344.6v5.8" stroke="#afb1b3" stroke-width="1.2"/><path d="M137 351.6h2.6l-1.3 1.3z" fill="#afb1b3"/>
<path d="M61.99999999999999 360.0h5.2l-2.6 4.6z" fill="#afb1b3"/>
<rect x="72.89999999999999" y="359.0" width="6.8" height="6.8" rx="1" fill="none" stroke="#9aa7b0" stroke-width="1.1"/><path d="M79.7 359.4v6" stroke="#40b6e0" stroke-width="1.2"/><path d="M73.8 365.79999999999995h3.6" stroke="#40b6e0" stroke-width="1.2"/><path d="M72.89999999999999 359.9v2.8" stroke="#40b6e0" stroke-width="1"/>
<circle cx="79.5" cy="365.59999999999997" r="1.2" fill="#9aa7b0"/>
<path d="M72.5 371.1h5.2l-2.6 4.6z" fill="#afb1b3"/>
<rect x="81.8" y="371" width="2" height="6" fill="#9aa7b0"/><rect x="84.39999999999999" y="370.4" width="3.2" height="7.2" rx=".6" fill="#9aa7b0"/><rect x="88.1" y="371.4" width="1.6" height="1.4" fill="#9aa7b0"/><rect x="88.1" y="374.8" width="1.6" height="1.4" fill="#9aa7b0"/>
<circle cx="89.39999999999999" cy="377.2" r="1.3" fill="#3ec93e"/>
<rect x="93.0" y="382.1" width="6.8" height="6.8" rx="1" fill="none" stroke="#9aa7b0" stroke-width="1.1"/><path d="M99.80000000000001 382.5v6" stroke="#40b6e0" stroke-width="1.2"/><path d="M93.9 388.9h3.6" stroke="#40b6e0" stroke-width="1.2"/><path d="M93.0 383.0v2.8" stroke="#40b6e0" stroke-width="1"/>
<circle cx="99.60000000000001" cy="388.7" r="1.2" fill="#9aa7b0"/>
<path d="M61.99999999999999 392.8h5.2l-2.6 4.6z" fill="#afb1b3"/>
<rect x="72.89999999999999" y="393.0" width="6.8" height="6.8" rx="1" fill="none" stroke="#9aa7b0" stroke-width="1.1"/><path d="M79.7 393.4v6" stroke="#40b6e0" stroke-width="1.2"/><path d="M73.8 399.79999999999995h3.6" stroke="#40b6e0" stroke-width="1.2"/><path d="M72.89999999999999 393.9v2.8" stroke="#40b6e0" stroke-width="1"/>
<circle cx="79.5" cy="399.59999999999997" r="1.2" fill="#9aa7b0"/>
<path d="M72.5 404.1h5.2l-2.6 4.6z" fill="#afb1b3"/>
<rect x="81.8" y="404.5" width="2" height="6" fill="#9aa7b0"/><rect x="84.39999999999999" y="403.9" width="3.2" height="7.2" rx=".6" fill="#9aa7b0"/><rect x="88.1" y="404.9" width="1.6" height="1.4" fill="#9aa7b0"/><rect x="88.1" y="408.3" width="1.6" height="1.4" fill="#9aa7b0"/>
<rect x="93.0" y="415.6" width="6.8" height="6.8" rx="1" fill="none" stroke="#9aa7b0" stroke-width="1.1"/><path d="M99.80000000000001 416v6" stroke="#40b6e0" stroke-width="1.2"/><path d="M93.9 422.4h3.6" stroke="#40b6e0" stroke-width="1.2"/><path d="M93.0 416.5v2.8" stroke="#40b6e0" stroke-width="1"/>
<circle cx="99.60000000000001" cy="422.2" r="1.2" fill="#9aa7b0"/>
<rect x="325" y="344.7" width="7" height="5.5" fill="#afb1b3"/><path d="M327 345.9l2 1.6-2 1.6" stroke="#3c3f41" stroke-width=".9" fill="none"/>
<rect x="366.4" y="344" width="8.6" height="7" fill="#9aa7b0"/><path d="M368.97999999999996 346.1h5.159999999999999 M368.97999999999996 348.34h5.159999999999999 M368.97999999999996 345.05v5.25 M371.56 345.05v5.25" stroke="#3c3f41" stroke-width=".8"/>
<path d="M472 345.5l3.6 3.6 M475.6 345.5l-3.6 3.6" stroke="#6f7375" stroke-width=".9"/>
<path d="M323.2 360.8v5.2 M329 360.8l-3 2.6 3 2.6" stroke="#5b5e60" stroke-width="1" fill="none"/>
<path d="M342.3 360.8l-3 2.6 3 2.6" stroke="#5b5e60" stroke-width="1" fill="none"/>
<path d="M376 362.3l1.9 1.9 1.9-1.9" stroke="#afb1b3" stroke-width="0.8" fill="none"/>
<path d="M388.3 360.8l3 2.6-3 2.6" stroke="#5b5e60" stroke-width="1" fill="none"/>
<path d="M401.5 360.8l3 2.6-3 2.6 M407 360.8v5.2" stroke="#5b5e60" stroke-width="1" fill="none"/>
<rect x="413.9" y="358" width="1" height="11" fill="#505456"/>
<path d="M420 362.9a3.3 3.3 0 0 1 5.8-1.4" stroke="#afb1b3" stroke-width="1.2" fill="none"/><path d="M426.7 359.9v3h-3z" fill="#afb1b3"/><path d="M426.4 364a3.3 3.3 0 0 1 -5.8 1.4" stroke="#afb1b3" stroke-width="1.2" fill="none"/><path d="M419.7 367v-3h3z" fill="#afb1b3"/>
<rect x="432.2" y="358" width="1" height="11" fill="#505456"/>
<rect x="439.2" y="360.4" width="5.6" height="5.8" fill="#5b5e60"/>
<rect x="451.0" y="358" width="1" height="11" fill="#505456"/>
<path d="M476 365.3l3.6-2.2v1.4h1.2v1.6h-1.2v1.4z" fill="#3d9ae0"/><path d="M485 361.4l-3.6 2.2v-1.4h-1.2v-1.6h1.2v-1.4z" fill="#3d9ae0"/><path d="M482.3 366.8h2.8l-1.4 1.3z" fill="#d0d0d0"/>
<rect x="489.1" y="358" width="1" height="11" fill="#505456"/>
<path d="M495.2 368l3-3" stroke="#afb1b3" stroke-width="1" stroke-linecap="round"/><path d="M497 362.6l3.2-3.2 1.8.6.8.8.6 1.8-3.2 3.2-.4 1.6-4.4-4.4z" fill="#afb1b3"/>
<path d="M863 362.3l1.9 1.9 1.9-1.9" stroke="#afb1b3" stroke-width="0.8" fill="none"/>
<path d="M878.8 359v5.2 M876.6 362.2l2.2 2.2 2.2-2.2" stroke="#afb1b3" stroke-width="1.1" fill="none"/><path d="M874.8 365.8h5 l1.8 1.5" stroke="#afb1b3" stroke-width="1" fill="none"/>
<path d="M889.5 359.2h6.8" stroke="#afb1b3" stroke-width="1.1"/><path d="M892.9 367.4v-5.5 M890.7 363.9l2.2-2.2 2.2 2.2" stroke="#afb1b3" stroke-width="1.1" fill="none"/>
<polygon points="907.60,359.30 908.56,359.43 908.93,360.69 909.48,361.12 910.80,361.15 911.17,362.04 910.26,363.00 910.17,363.69 910.80,364.85 910.22,365.62 908.93,365.31 908.29,365.57 907.60,366.70 906.64,366.57 906.27,365.31 905.72,364.88 904.40,364.85 904.03,363.96 904.94,363.00 905.03,362.31 904.40,361.15 904.98,360.38 906.27,360.69 906.91,360.43" fill="#afb1b3"/><circle cx="907.6" cy="363" r="1.22" fill="#3c3f41"/>
<path d="M910.3 366.8h2.4l-1.2 1.2z" fill="#afb1b3"/>
<rect x="341.5" y="375" width="8.4" height="7" fill="#8c9196"/><path d="M344.02 377.1h5.04 M344.02 379.34h5.04 M344.02 376.05v5.25 M346.54 376.05v5.25" stroke="#3c3f41" stroke-width=".8"/>
<path d="M401.3 378h3.4l-1.7-2.1z M401.3 380.2h3.4l-1.7 2.1z" fill="#b4b7ba"/>
<rect x="416" y="375" width="8.4" height="7" fill="#8c9196"/><path d="M418.52 377.1h5.04 M418.52 379.34h5.04 M418.52 376.05v5.25 M421.04 376.05v5.25" stroke="#3c3f41" stroke-width=".8"/>
<path d="M484.1 378h3.4l-1.7-2.1z M484.1 380.2h3.4l-1.7 2.1z" fill="#b4b7ba"/>
<rect x="495" y="375" width="8.4" height="7" fill="#8c9196"/><path d="M497.52 377.1h5.04 M497.52 379.34h5.04 M497.52 376.05v5.25 M500.04 376.05v5.25" stroke="#3c3f41" stroke-width=".8"/>
<path d="M608.0999999999999 378h3.4l-1.7-2.1z M608.0999999999999 380.2h3.4l-1.7 2.1z" fill="#b4b7ba"/>
<rect x="618.9" y="375" width="8.4" height="7" fill="#8c9196"/><path d="M621.42 377.1h5.04 M621.42 379.34h5.04 M621.42 376.05v5.25 M623.9399999999999 376.05v5.25" stroke="#3c3f41" stroke-width=".8"/>
<path d="M735.0999999999999 378h3.4l-1.7-2.1z M735.0999999999999 380.2h3.4l-1.7 2.1z" fill="#b4b7ba"/>
<rect x="746" y="375" width="8.4" height="7" fill="#8c9196"/><path d="M748.52 377.1h5.04 M748.52 379.34h5.04 M748.52 376.05v5.25 M751.04 376.05v5.25" stroke="#3c3f41" stroke-width=".8"/>
<path d="M841.6999999999999 378h3.4l-1.7-2.1z M841.6999999999999 380.2h3.4l-1.7 2.1z" fill="#b4b7ba"/>
<rect x="852.5" y="375" width="8.4" height="7" fill="#8c9196"/><path d="M855.02 377.1h5.04 M855.02 379.34h5.04 M855.02 376.05v5.25 M857.54 376.05v5.25" stroke="#3c3f41" stroke-width=".8"/>
<path d="M904.8 378h3.4l-1.7-2.1z M904.8 380.2h3.4l-1.7 2.1z" fill="#b4b7ba"/>
<path d="M50 591.2h6.2 M50 593.4h6.2 M50 595.6h6.2" stroke="#9a9da0" stroke-width="1"/><path d="M50 597.4h6.2" stroke="#9a9da0" stroke-width=".8"/>
<path d="M99.7 590.3l3.2 1.8v3.7l-3.2 1.8-3.2-1.8v-3.7z" fill="#afb1b3"/><path d="M98.8 592.3l2.5 1.7-2.5 1.7z" fill="#2d2f31"/>
<rect x="150" y="590.6" width="6.2" height="6.4" fill="#9a9da0"/><path d="M151.3 592l1.6 1.4-1.6 1.4 M153.3 595.5h2" stroke="#3c3f41" stroke-width=".8" fill="none"/>
<rect x="35.5" y="604" width="5.8" height="5.6" fill="none" stroke="#9a9da0" stroke-width=".9"/><path d="M37 603h5.3v5.3" stroke="#9a9da0" stroke-width=".9" fill="none"/>
<path d="M877 597.6a3.6 3.4 0 1 1 3.7-3.4v3.4z" fill="none" stroke="#afb1b3" stroke-width="1"/>
<defs><linearGradient id="vg" x1="0" y1="0" x2="1" y2="1"><stop offset="0" stop-color="#3ec97a"/><stop offset="1" stop-color="#2f8fe0"/></linearGradient></defs><path d="M886.6 602h2l1.6 5 3-6.3h1.8l-4 8.6h-1.8z" fill="url(#vg)"/>
<rect x="900.3" y="605" width="6" height="4.2" fill="#afb1b3"/><path d="M901.4 605v-1.6a1.7 1.7 0 0 1 3.2-.8" stroke="#afb1b3" stroke-width="1" fill="none"/>
<path d="M915 604.5h6.5l-.6-2.5h-5.3z" fill="#afb1b3"/><rect x="914.6" y="605.6" width="7.3" height="1.2" fill="#afb1b3"/><path d="M915.6 609h5.3" stroke="#afb1b3" stroke-width="1.2"/></svg>
</body></html>
